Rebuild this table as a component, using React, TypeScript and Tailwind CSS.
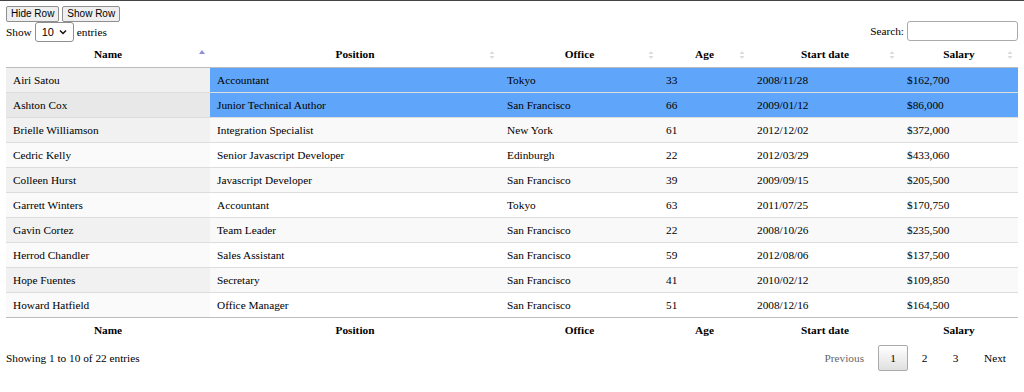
import React from "react"

const rows = [
  ["Airi Satou", "Accountant", "Tokyo", "33", "2008/11/28", "$162,700"],
  ["Ashton Cox", "Junior Technical Author", "San Francisco", "66", "2009/01/12", "$86,000"],
  ["Brielle Williamson", "Integration Specialist", "New York", "61", "2012/12/02", "$372,000"],
  ["Cedric Kelly", "Senior Javascript Developer", "Edinburgh", "22", "2012/03/29", "$433,060"],
  ["Colleen Hurst", "Javascript Developer", "San Francisco", "39", "2009/09/15", "$205,500"],
  ["Garrett Winters", "Accountant", "Tokyo", "63", "2011/07/25", "$170,750"],
  ["Gavin Cortez", "Team Leader", "San Francisco", "22", "2008/10/26", "$235,500"],
  ["Herrod Chandler", "Sales Assistant", "San Francisco", "59", "2012/08/06", "$137,500"],
  ["Hope Fuentes", "Secretary", "San Francisco", "41", "2010/02/12", "$109,850"],
  ["Howard Hatfield", "Office Manager", "San Francisco", "51", "2008/12/16", "$164,500"],
]

const cols = ["Name", "Position", "Office", "Age", "Start date", "Salary"]
const widths = ["w-[204px]", "w-[290px]", "w-[159px]", "w-[91px]", "w-[150px]", "w-[118px]"]
const selected = [0, 1]

function SortIcon({ active }: { active: boolean }) {
  if (active) {
    return (
      <svg width="8" height="10" viewBox="0 0 8 10" className="absolute right-[4px] top-[5px]">
        <path d="M1 6 L4 2 L7 6 Z" fill="#8c8fd8" />
      </svg>
    )
  }
  return (
    <svg width="8" height="10" viewBox="0 0 8 10" className="absolute right-[4px] top-[7px]">
      <path d="M1.5 4 L4 1 L6.5 4 Z" fill="#dcdcdc" />
      <path d="M1.5 6 L4 9 L6.5 6 Z" fill="#dcdcdc" />
    </svg>
  )
}

export default function App() {
  return (
    <div className="w-[1024px] h-[392px] bg-white border-t border-[#444] font-['Liberation_Serif',serif] text-[11.3px] text-black px-[6px] overflow-hidden">
      {/* buttons */}
      <div className="flex gap-[3px] pt-[5px] font-['Liberation_Sans',Arial,sans-serif] text-[10px]">
        <button className="h-[16px] px-[4px] leading-[14px] border border-[#8f8f8f] bg-[#efefef] rounded-[2px]">Hide Row</button>
        <button className="h-[16px] px-[4px] leading-[14px] border border-[#8f8f8f] bg-[#efefef] rounded-[2px]">Show Row</button>
      </div>

      {/* controls */}
      <div className="flex items-start justify-between">
        <div className="flex items-center gap-[3px] h-[20px]">
          <span>Show</span>
          <div className="flex items-center justify-between w-[39px] h-[20px] border border-[#8f8f8f] rounded-[3px] px-[6px] font-['Liberation_Sans',Arial,sans-serif] text-[11px]">
            <span>10</span>
            <svg width="8" height="6" viewBox="0 0 8 6">
              <path d="M1 1.5 L4 4.5 L7 1.5" stroke="#111" strokeWidth="1.5" fill="none" />
            </svg>
          </div>
          <span>entries</span>
        </div>
        <div className="flex items-center gap-[3px] h-[20px] mt-[-1px]">
          <span>Search:</span>
          <div className="w-[111px] h-[20px] border border-[#aaa] rounded-[3px]" />
        </div>
      </div>

      {/* table */}
      <table className="table-fixed border-collapse w-[1012px] mt-[1px]">
        <colgroup>
          {widths.map((w, i) => (
            <col key={i} className={w} />
          ))}
        </colgroup>
        <thead>
          <tr className="border-b border-[#bcbcbc]">
            {cols.map((c, i) => (
              <th key={c} className="relative h-[24px] font-bold text-center px-[10px] pb-[1px]">
                {c}
                <SortIcon active={i === 0} />
              </th>
            ))}
          </tr>
        </thead>
        <tbody>
          {rows.map((r, ri) => {
            const sel = selected.includes(ri)
            const odd = ri % 2 === 0
            return (
              <tr key={ri} className={`h-[25px] ${ri > 0 ? "border-t border-[#dddddd]" : ""} ${sel ? "bg-[#5fa5f9]" : odd ? "bg-[#f9f9f9]" : "bg-white"}`}>
                {r.map((v, ci) => (
                  <td
                    key={ci}
                    className={`px-[7px] pt-[1px] whitespace-nowrap ${
                      ci === 0 ? (sel ? (odd ? "bg-[#f0f0f0]" : "bg-[#e8e8e8]") : odd ? "bg-[#f1f1f1]" : "bg-[#fafafa]") : ""
                    }`}
                  >
                    {v}
                  </td>
                ))}
              </tr>
            )
          })}
        </tbody>
        <tfoot>
          <tr className="border-t border-[#bcbcbc]">
            {cols.map((c) => (
              <th key={c} className="h-[26px] font-bold text-center pt-[1px]">
                {c}
              </th>
            ))}
          </tr>
        </tfoot>
      </table>

      {/* info + pagination */}
      <div className="flex items-center justify-between mt-[2px]">
        <span>Showing 1 to 10 of 22 entries</span>
        <div className="flex items-center">
          <span className="pr-[14px] text-[#666]">Previous</span>
          <span className="w-[30px] h-[26px] mr-[1px] flex items-center justify-center border border-[#aaa] rounded-[2px] bg-gradient-to-b from-white to-[#e0e0e0]">1</span>
          <span className="w-[31px] text-center">2</span>
          <span className="w-[31px] text-center">3</span>
          <span className="pl-[13px] pr-[12px]">Next</span>
        </div>
      </div>
    </div>
  )
}
